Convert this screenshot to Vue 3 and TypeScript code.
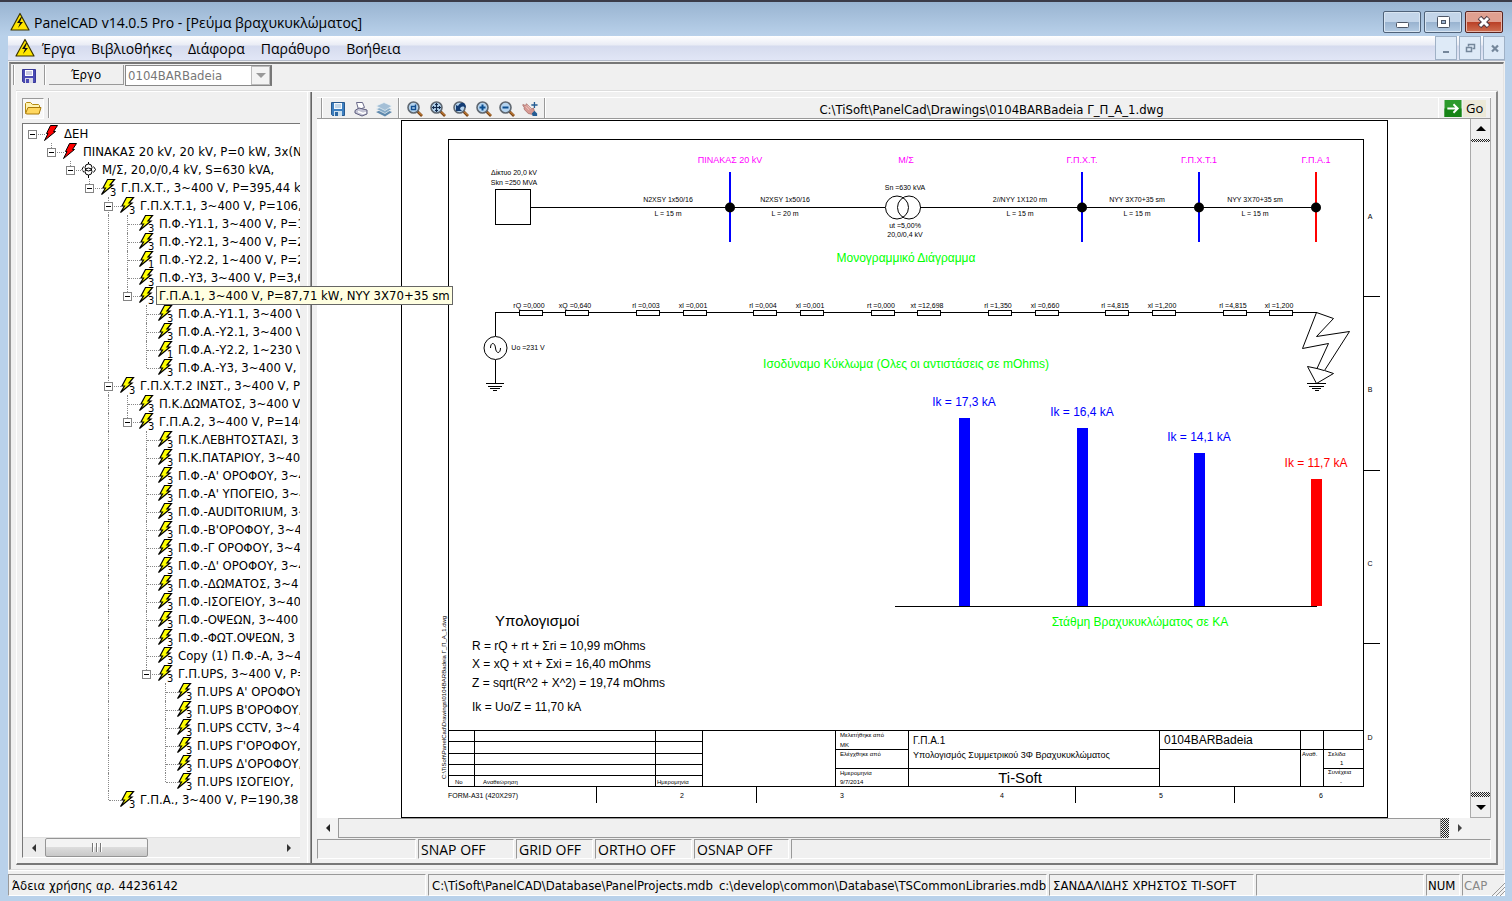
<script setup lang="ts">
import { computed, ref } from 'vue'

interface RawNode { depth: number; label: string; kind: 'supply' | 'trafo' | 'panel'; phase?: string; parent?: boolean; hovered?: boolean }
interface Row extends RawNode { guides: boolean[]; last: boolean }

const menus: string[] = ['Έργα', 'Βιβλιοθήκες', 'Διάφορα', 'Παράθυρο', 'Βοήθεια']
const project = ref<string>('0104BARBadeia')

const panel = (depth: number, label: string, phase = '3', parent = false, hovered = false): RawNode => ({ depth, label, kind: 'panel', phase, parent, hovered })

const nodes: RawNode[] = [
  { depth: 0, label: 'ΔΕΗ', kind: 'supply', parent: true },
  { depth: 1, label: 'ΠΙΝΑΚΑΣ 20 kV, 20 kV, P=0 kW, 3x(N2', kind: 'supply', parent: true },
  { depth: 2, label: 'Μ/Σ, 20,0/0,4 kV, S=630 kVA,', kind: 'trafo', parent: true },
  panel(3, 'Γ.Π.Χ.Τ., 3~400 V, P=395,44 kW', '3', true),
  panel(4, 'Γ.Π.Χ.Τ.1, 3~400 V, P=106,', '3', true),
  panel(5, 'Π.Φ.-Υ1.1, 3~400 V, P=1'),
  panel(5, 'Π.Φ.-Υ2.1, 3~400 V, P=2'),
  panel(5, 'Π.Φ.-Υ2.2, 1~400 V, P=2', '1'),
  panel(5, 'Π.Φ.-Υ3, 3~400 V, P=3,6'),
  panel(5, 'Γ.Π.Α.1', '3', true, true),
  panel(6, 'Π.Φ.Α.-Υ1.1, 3~400 V'),
  panel(6, 'Π.Φ.Α.-Υ2.1, 3~400 V'),
  panel(6, 'Π.Φ.Α.-Υ2.2, 1~230 V', '1'),
  panel(6, 'Π.Φ.Α.-Υ3, 3~400 V,'),
  panel(4, 'Γ.Π.Χ.Τ.2 ΙΝΣΤ., 3~400 V, P', '3', true),
  panel(5, 'Π.Κ.ΔΩΜΑΤΟΣ, 3~400 V,'),
  panel(5, 'Γ.Π.Α.2, 3~400 V, P=146', '3', true),
  panel(6, 'Π.Κ.ΛΕΒΗΤΟΣΤΑΣΙ, 3~'),
  panel(6, 'Π.Κ.ΠΑΤΑΡΙΟΥ, 3~400'),
  panel(6, "Π.Φ.-Α' ΟΡΟΦΟΥ, 3~4"),
  panel(6, "Π.Φ.-Α' ΥΠΟΓΕΙΟ, 3~4"),
  panel(6, 'Π.Φ.-AUDITORIUM, 3~'),
  panel(6, "Π.Φ.-Β'ΟΡΟΦΟΥ, 3~4"),
  panel(6, 'Π.Φ.-Γ ΟΡΟΦΟΥ, 3~4'),
  panel(6, "Π.Φ.-Δ' ΟΡΟΦΟΥ, 3~4"),
  panel(6, 'Π.Φ.-ΔΩΜΑΤΟΣ, 3~4'),
  panel(6, 'Π.Φ.-ΙΣΟΓΕΙΟΥ, 3~40'),
  panel(6, 'Π.Φ.-ΟΨΕΩΝ, 3~400'),
  panel(6, 'Π.Φ.-ΦΩΤ.ΟΨΕΩΝ, 3'),
  panel(6, 'Copy (1) Π.Φ.-Α, 3~4'),
  panel(6, 'Γ.Π.UPS, 3~400 V, P=', '3', true),
  panel(7, "Π.UPS Α' ΟΡΟΦΟΥ"),
  panel(7, "Π.UPS Β'ΟΡΟΦΟΥ,"),
  panel(7, 'Π.UPS CCTV, 3~4'),
  panel(7, "Π.UPS Γ'ΟΡΟΦΟΥ,"),
  panel(7, "Π.UPS Δ'ΟΡΟΦΟΥ,"),
  panel(7, 'Π.UPS ΙΣΟΓΕΙΟΥ,'),
  panel(4, 'Γ.Π.Α., 3~400 V, P=190,38'),
]

function continues(index: number, depth: number): boolean {
  for (let i = index + 1; i < nodes.length; i++) {
    if (nodes[i].depth < depth) return false
    if (nodes[i].depth === depth) return true
  }
  return false
}

const rows = computed<Row[]>(() =>
  nodes.map((n, i) => ({
    ...n,
    guides: Array.from({ length: n.depth }, (_, d) => continues(i, d)),
    last: !continues(i, n.depth),
  })),
)

const zoomTools = ['window', 'extents', 'previous', 'in', 'out']
const zoomLabels = ['Zoom window', 'Zoom extents', 'Zoom previous', 'Zoom in', 'Zoom out']

const buses = [
  { x: 730, name: 'ΠΙΝΑΚΑΣ 20 kV', color: '#00f' },
  { x: 1082, name: 'Γ.Π.Χ.Τ.', color: '#00f' },
  { x: 1199, name: 'Γ.Π.Χ.Τ.1', color: '#00f' },
  { x: 1316, name: 'Γ.Π.Α.1', color: '#f00' },
]
const cables = [
  { x: 668, type: 'N2XSY 1x50/16', len: 'L = 15 m' },
  { x: 785, type: 'N2XSY 1x50/16', len: 'L = 20 m' },
  { x: 1020, type: '2//NYY 1X120 rm', len: 'L = 15 m' },
  { x: 1137, type: 'NYY 3X70+35 sm', len: 'L = 15 m' },
  { x: 1255, type: 'NYY 3X70+35 sm', len: 'L = 15 m' },
]
const impedances = [
  { x: 531, t: 'rQ =0,000' }, { x: 577, t: 'xQ =0,640' },
  { x: 648, t: 'rl =0,003' }, { x: 695, t: 'xl =0,001' },
  { x: 765, t: 'rl =0,004' }, { x: 812, t: 'xl =0,001' },
  { x: 883, t: 'rt =0,000' }, { x: 929, t: 'xt =12,698' },
  { x: 1000, t: 'rl =1,350' }, { x: 1047, t: 'xl =0,660' },
  { x: 1117, t: 'rl =4,815' }, { x: 1164, t: 'xl =1,200' },
  { x: 1235, t: 'rl =4,815' }, { x: 1281, t: 'xl =1,200' },
]
const levels = [
  { x: 959, top: 418, label: 'Ik = 17,3 kA', color: '#00f' },
  { x: 1077, top: 428, label: 'Ik = 16,4 kA', color: '#00f' },
  { x: 1194, top: 453, label: 'Ik = 14,1 kA', color: '#00f' },
  { x: 1311, top: 479, label: 'Ik = 11,7 kA', color: '#f00' },
]
const formulas = [
  { y: 650, t: 'R = rQ + rt + Σri = 10,99 mOhms' },
  { y: 668, t: 'X = xQ + xt + Σxi = 16,40 mOhms' },
  { y: 687, t: 'Z = sqrt(R^2 + X^2) = 19,74 mOhms' },
  { y: 711, t: 'Ik = Uo/Z = 11,70 kA' },
]
const zonesV = [{ y: 219, t: 'A' }, { y: 392, t: 'B' }, { y: 566, t: 'C' }, { y: 740, t: 'D' }]
const zonesH = [{ x: 682, t: '2' }, { x: 842, t: '3' }, { x: 1002, t: '4' }, { x: 1161, t: '5' }, { x: 1321, t: '6' }]
const snaps = ['SNAP OFF', 'GRID OFF', 'ORTHO OFF', 'OSNAP OFF']
</script>

<template>
  <div class="window">
    <header class="titlebar">
      <svg class="warn" viewBox="0 0 20 20" aria-hidden="true">
        <path d="M10 1.500 19 18H1Z" fill="#ffe600" stroke="#3a3300" stroke-width="1.200" stroke-linejoin="round" />
        <path d="M11 5 7 11h3l-2 5 5-6h-3l2-5Z" fill="#111" />
      </svg>
      <h1>PanelCAD v14.0.5 Pro - [Ρεύμα βραχυκυκλώματος]</h1>
      <div class="caption">
        <button type="button" aria-label="Minimize">
          <svg viewBox="0 0 36 20"><rect x="12.500" y="10.500" width="12" height="5" rx="1" fill="#fff" stroke="#4d5666" /></svg>
        </button>
        <button type="button" aria-label="Restore">
          <svg viewBox="0 0 36 20"><rect x="12.500" y="4.500" width="12" height="11" rx="1" fill="#fff" stroke="#4d5666" /><rect x="16.500" y="8.500" width="4" height="3" fill="#9db5d0" stroke="#4d5666" /></svg>
        </button>
        <button type="button" class="close" aria-label="Close">
          <svg viewBox="0 0 36 20"><path d="M13.500 5.500l9 9M22.500 5.500l-9 9" stroke="#4d3a45" stroke-width="5" /><path d="M14 6l8 8M22 6l-8 8" stroke="#fff" stroke-width="3" /></svg>
        </button>
      </div>
    </header>

    <div class="client">
      <nav class="menubar">
        <svg class="warn" viewBox="0 0 20 20" aria-hidden="true">
          <path d="M10 1.500 19 18H1Z" fill="#ffe600" stroke="#3a3300" stroke-width="1.200" stroke-linejoin="round" />
          <path d="M11 5 7 11h3l-2 5 5-6h-3l2-5Z" fill="#111" />
        </svg>
        <button v-for="m in menus" :key="m" type="button" class="menu">{{ m }}</button>
        <div class="mdi">
          <button type="button" aria-label="Minimize document"><svg viewBox="0 0 20 20"><path d="M7 14h6" stroke="#75879b" stroke-width="2" /></svg></button>
          <button type="button" aria-label="Restore document"><svg viewBox="0 0 20 20"><path d="M8.500 8.500V6.500h6v4h-2M8 6.500h7" fill="none" stroke="#75879b" stroke-width="1.500" /><path d="M6.500 9.500h5v4h-5ZM6 9.500h6" fill="none" stroke="#75879b" stroke-width="1.500" /></svg></button>
          <button type="button" aria-label="Close document"><svg viewBox="0 0 20 20"><path d="M8 7.500l6 6M14 7.500l-6 6" stroke="#75879b" stroke-width="2.200" /></svg></button>
        </div>
      </nav>

      <div class="document">
        <div class="projectbar">
          <i class="sep"></i>
          <button type="button" class="tool" aria-label="Save project">
            <svg viewBox="0 0 16 16"><path d="M1.500 1.500h13v13h-12l-1-1Z" fill="#4b4bb4" stroke="#38389a" /><path d="M4 2h8v6H4Z" fill="#fff" /><path d="M5 4h6M5 6h6" stroke="#9a9ac8" /><path d="M4 10h8v5H4Z" fill="#d9d9e6" /><path d="M5 11h3v4H5Z" fill="#4b4bb4" /></svg>
          </button>
          <i class="sep"></i>
          <label class="project-label" for="project">Έργο</label>
          <div class="combo">
            <select id="project" v-model="project"><option>0104BARBadeia</option></select>
            <span class="combo-arrow" aria-hidden="true"></span>
          </div>
        </div>

        <main class="workspace">
          <section class="left">
            <div class="lefttools">
              <button type="button" class="folder" aria-label="Open folder">
                <svg viewBox="0 0 18 16"><path d="M1.500 12.500v-9l1-1h4l2 2h6l1 1v7Z" fill="#fff3b0" stroke="#b58a10" /><path d="M1.500 13.500 4 7.500h13l-2 6.500h-12Z" fill="#ffd75e" stroke="#a87908" /></svg>
              </button>
              <i class="sep"></i>
            </div>
            <div class="treebox">
              <ul class="tree">
                <li v-for="(r, i) in rows" :key="i" class="row">
                  <span v-for="(g, k) in r.guides" :key="k" class="guide" :class="{ on: g && k > 0 }"></span>
                  <span class="guide own" :class="{ root: r.depth === 0, last: r.last }">
                    <button v-if="r.parent" type="button" class="toggle" :aria-label="'Collapse ' + r.label"></button>
                  </span>
                  <svg class="node" viewBox="0 0 22 18" aria-hidden="true">
                    <template v-if="r.kind === 'trafo'">
                      <circle cx="8.500" cy="6.500" r="3.500" fill="#fff" stroke="#000" /><circle cx="8.500" cy="10.500" r="3.500" fill="none" stroke="#000" />
                      <path d="M8.500 1v2M8.500 14v3M3.500 5.500 2 8.500l2 3M13.500 5.500l2 3-2 3" fill="none" stroke="#000" />
                    </template>
                    <template v-else-if="r.kind === 'supply'">
                      <path d="M8.500.500h7l-4 6h2L2.500 15.500l3.500-7H4.500Z" fill="#f00" stroke="#000" />
                    </template>
                    <template v-else>
                      <path d="M8.500.500h7l-4.500 5.500h3L2.500 15.500 6.500 9H4Z" fill="#ff0" stroke="#000" stroke-width="1.200" />
                      <text x="11" y="17">{{ r.phase }}</text>
                    </template>
                  </svg>
                  <span v-if="!r.hovered" class="label">{{ r.label }}</span>
                </li>
              </ul>
              <div class="treescroll">
                <button type="button" class="arrow" aria-label="Scroll left"><svg viewBox="0 0 16 16"><path d="M10 4v8L6 8Z" fill="#333" /></svg></button>
                <div class="track"><span class="thumb"><b></b><b></b><b></b></span></div>
                <button type="button" class="arrow" aria-label="Scroll right"><svg viewBox="0 0 16 16"><path d="M6 4v8l4-4Z" fill="#333" /></svg></button>
              </div>
            </div>
            <div class="tooltip" role="tooltip">Γ.Π.Α.1, 3~400 V, P=87,71 kW, NYY 3X70+35 sm</div>
          </section>
          <div class="splitter"></div>

          <section class="right">
            <div class="drawtools">
              <i class="sep"></i>
              <button type="button" class="tool" aria-label="Save drawing">
                <svg viewBox="0 0 16 16"><path d="M1.500 1.500h13v13h-12l-1-1Z" fill="#3d7fc0" stroke="#27598f" /><path d="M4 2h8v6H4Z" fill="#f4f9fd" /><path d="M5 4h6M5 6h6" stroke="#8fb4d6" /><path d="M4 10h8v5H4Z" fill="#cde0ee" /><path d="M5 11h3v4H5Z" fill="#2c67a3" /></svg>
              </button>
              <button type="button" class="tool" aria-label="Print">
                <svg viewBox="0 0 16 16"><path d="M3.500 1.500h6l2 5-6 2Z" fill="#fff" stroke="#686888" /><path d="M2 9.500 6 7l8 2v4l-5 2-7-3Z" fill="#c3c3d4" stroke="#5d5d7d" /><path d="M5 10.500l5 2 3-1" fill="none" stroke="#fff" stroke-width="1.500" /></svg>
              </button>
              <button type="button" class="tool" aria-label="Layers">
                <svg viewBox="0 0 16 16"><path d="M0 11l8-3 8 3-7 4.500Z" fill="#5f89ad" /><path d="M0 8l8-3 8 3-7 4.500Z" fill="#86abc8" stroke="#eef3f7" stroke-width=".700" /><path d="M0 5l8-3.500L16 5 9 9.500Z" fill="#a4bfd6" stroke="#eef3f7" stroke-width=".700" /></svg>
              </button>
              <i class="sep"></i>
              <button v-for="(z, i) in zoomTools" :key="z" type="button" class="tool" :aria-label="zoomLabels[i]">
                <svg viewBox="0 0 16 16">
                  <path d="M10.500 10.500l4.500 4.500" stroke="#7c4413" stroke-width="2.600" /><path d="M11 10.500l4 4" stroke="#e49a4a" />
                  <circle cx="6.500" cy="6.500" r="5.500" fill="#b5d4ef" stroke="#5f6770" stroke-width="1.600" />
                  <path v-if="z === 'window'" d="M4.500 5.500h4v3h-4ZM8.500 3.500v5" fill="none" stroke="#134f91" stroke-width="1.400" />
                  <path v-else-if="z === 'extents'" d="M6.500 2v9M2 6.500h9M5 3.500h3M5 9.500h3M3.500 5v3M9.500 5v3" stroke="#142b4d" stroke-width="1.200" />
                  <path v-else-if="z === 'previous'" d="M3 4v6h6L7 8c1-3 3-3 6-1 0-6-5-7-8-2Z" fill="#123b73" />
                  <path v-else-if="z === 'in'" d="M6.500 3.500v6M3.500 6.500h6" stroke="#0c4f91" stroke-width="2" />
                  <path v-else d="M3.500 6.500h6" stroke="#0c4f91" stroke-width="2" />
                </svg>
              </button>
              <button type="button" class="tool" aria-label="Pan">
                <svg viewBox="0 0 18 16"><path d="M1 3l3 1 1-2 6 6 2-1 1 4-3 3-4-1-5-5 1-1-2-3Z" fill="#d79a94" stroke="#a06560" stroke-width=".800" /><path d="M4 5l4 4M6 4l4 4" stroke="#f1cdc8" /><path d="M11 13l3-3 3 3v3h-5Z" fill="#245c93" /><path d="M14 0v7M10.500 3.500h7" stroke="#245c93" stroke-width="1.500" /></svg>
              </button>
              <i class="sep"></i>
              <output class="path">C:\TiSoft\PanelCad\Drawings\0104BARBadeia Γ_Π_Α_1.dwg</output>
              <button type="button" class="go">
                <svg viewBox="0 0 18 18"><rect width="18" height="18" fill="#2c9a2c" /><rect y="9" width="18" height="9" fill="#168416" /><path d="M3 9h11M9.500 4.500 14 9l-4.500 4.500" fill="none" stroke="#fff" stroke-width="2" /></svg>
                <span>Go</span>
              </button>
            </div>

            <div class="stage">
              <div class="canvas">
                <svg class="drawing" width="1154" height="699" viewBox="317 119 1154 699" role="img" aria-label="Ρεύμα βραχυκυκλώματος">
                  <g class="ink crisp">
                    <rect x="401.500" y="120.500" width="986" height="697" />
                    <rect x="448.500" y="139.500" width="915" height="647" />
                    <path d="M1363 296.500h17M1363 470.500h17M1363 643.500h17M596.500 787v16M756.500 787v16M1075.500 787v16M1234.500 787v16" />
                    <path d="M448 730.500h915M448 741.500h254M448 753.500h254M448 764.500h254M448 775.500h254M474.500 730v56M655.500 730v56M702.500 730v56" />
                    <path d="M835.500 730v56M835 749.500h73M835 768.500h324M908.500 730v56M1159.500 730v56M1159 749.500h204M1300.500 730v56M1323.500 730v56M1323 768.500h40" />
                    <rect x="495.500" y="189.500" width="35" height="35" />
                    <path d="M530 207.500h355M920 207.500h396M495.500 336V312.500H1317M495.500 360v23" />
                    <path d="M895 606.500h422" />
                    <path d="M486 383.500h18M488 386.500h14M490 388.500h10M493 390.500h4M1307 383.500h19M1309 386.500h15M1312 388.500h9M1315 390.500h4" />
                  </g>
                  <g class="ink">
                    <circle cx="897" cy="207.500" r="11.500" /><circle cx="909" cy="207.500" r="11.500" />
                    <circle cx="495.500" cy="348" r="11.500" />
                    <path d="M490.500 348c0-6 4.500-6 5 0s5 6 5 0" />
                    <path d="M1316.500 312.500 1333.500 318.500 1316.500 336.500 1349.500 331.500 1324.500 370.500 1333.500 373.500 1316.500 383.500 1307.500 366.500 1317 368.500 1328.500 343.500 1302.500 348.500ZM1317 368.500l7 2" />
                  </g>

                  <g v-for="b in buses" :key="b.x">
                    <rect class="crisp" :x="b.x - 1" y="172" width="2" height="70" :fill="b.color" />
                    <circle :cx="b.x" cy="207.500" r="5" />
                    <text class="t9 mag mid" :x="b.x" y="163">{{ b.name }}</text>
                  </g>
                  <text class="t9 mag mid" x="906" y="163">Μ/Σ</text>
                  <g v-for="c in cables" :key="c.x" class="t7 mid">
                    <text :x="c.x" y="202">{{ c.type }}</text><text :x="c.x" y="216">{{ c.len }}</text>
                  </g>
                  <g class="t7 mid">
                    <text x="514" y="175">Δίκτυο 20,0 kV</text><text x="514" y="185">Skn =250 MVA</text>
                    <text x="905" y="190">Sn =630 kVA</text><text x="905" y="228">ut =5,00%</text><text x="905" y="237">20,0/0,4 kV</text>
                    <text x="528" y="350">Uo =231 V</text>
                  </g>
                  <g v-for="z in impedances" :key="z.x">
                    <rect class="crisp box" :x="z.x - 11.5" y="310.500" width="23" height="5" />
                    <text class="t7 mid" :x="z.x - 2" y="308">{{ z.t }}</text>
                  </g>
                  <g class="t12 green mid">
                    <text x="906" y="262">Μονογραμμικό Διάγραμμα</text>
                    <text x="906" y="368">Ισοδύναμο Κύκλωμα (Ολες οι αντιστάσεις σε mOhms)</text>
                    <text x="1140" y="626">Στάθμη Βραχυκυκλώματος σε ΚΑ</text>
                  </g>
                  <g v-for="l in levels" :key="l.x" :fill="l.color">
                    <rect class="crisp" :x="l.x" :y="l.top" width="11" :height="606 - l.top" />
                    <text class="t12 mid" :x="l.x + 5" :y="l.top - 12">{{ l.label }}</text>
                  </g>

                  <text class="t15" x="495" y="626">Υπολογισμοί</text>
                  <text v-for="f in formulas" :key="f.y" class="t12" x="472" :y="f.y">{{ f.t }}</text>

                  <text v-for="z in zonesV" :key="z.t" class="t7 mid" x="1370" :y="z.y">{{ z.t }}</text>
                  <text v-for="z in zonesH" :key="z.t" class="t7 mid" :x="z.x" y="798">{{ z.t }}</text>
                  <text class="t7" x="448" y="798">FORM-A31 (420X297)</text>
                  <text class="t6" transform="translate(446 779) rotate(-90)">C:\TiSoft\PanelCad\Drawings\0104BARBadeia Γ_Π_Α_1.dwg</text>
                  <g class="t6">
                    <text x="455" y="784">No</text><text x="483" y="784">Αναθεώρηση</text><text x="657" y="784">Ημερομηνία</text>
                    <text x="840" y="737">Μελετήθηκε από</text><text x="840" y="747">ΜΚ</text><text x="840" y="756">Ελέγχθηκε από</text>
                    <text x="840" y="775">Ημερομηνία</text><text x="840" y="784">9/7/2014</text>
                    <text x="1302" y="756">Αναθ.</text><text x="1328" y="756">Σελίδα</text><text x="1340" y="765">1</text>
                    <text x="1328" y="774">Συνέχεια</text><text x="1340" y="784">-</text>
                  </g>
                  <g class="t10"><text x="913" y="744">Γ.Π.Α.1</text></g>
                  <g class="t9"><text x="913" y="758">Υπολογισμός Συμμετρικού 3Φ Βραχυκυκλώματος</text></g>
                  <text class="t15 mid" x="1020" y="783">Ti-Soft</text>
                  <text class="t12" x="1164" y="744">0104BARBadeia</text>
                </svg>
              </div>
              <div class="vscroll">
                <button type="button" class="arrow" aria-label="Scroll up"><svg viewBox="0 0 20 20"><path d="M10 7l5 5H5Z" /></svg></button>
                <span class="grip"></span><span class="fill"></span><span class="grip"></span>
                <button type="button" class="arrow" aria-label="Scroll down"><svg viewBox="0 0 20 20"><path d="M10 13 5 8h10Z" /></svg></button>
              </div>
            </div>
            <div class="hscroll">
              <button type="button" class="arrow" aria-label="Scroll left"><svg viewBox="0 0 16 16"><path d="M10 4v8L6 8Z" fill="#222" /></svg></button>
              <span class="fill"></span><span class="grip"></span>
              <button type="button" class="arrow" aria-label="Scroll right"><svg viewBox="0 0 16 16"><path d="M6 4v8l4-4Z" fill="#444" /></svg></button>
            </div>
            <div class="snapbar">
              <span class="cell"></span>
              <button v-for="s in snaps" :key="s" type="button" class="cell">{{ s }}</button>
              <span class="cell"></span>
            </div>
          </section>
        </main>
      </div>

      <footer class="statusbar">
        <span class="cell">Άδεια χρήσης αρ. 44236142</span>
        <span class="cell"><span>C:\TiSoft\PanelCAD\Database\PanelProjects.mdb</span><span>c:\develop\common\Database\TSCommonLibraries.mdb</span></span>
        <span class="cell">ΣΑΝΔΑΛΙΔΗΣ ΧΡΗΣΤΟΣ TI-SOFT</span>
        <span class="cell"></span>
        <span class="cell">NUM</span>
        <span class="cell dim">CAP</span>
        <svg class="resize" viewBox="0 0 14 14" aria-hidden="true"><path d="M1 14 14 1M5 14l9-9M9 14l5-5" stroke="#999" /></svg>
      </footer>
    </div>
  </div>
</template>

<style>
html, body { margin: 0; }
</style>

<style scoped>
* { box-sizing: border-box; }
button { font: inherit; color: inherit; background: none; border: 0; padding: 0; margin: 0; display: block; }
button svg { display: block; }
.window {
  display: flex; flex-direction: column; height: 100vh; min-height: 600px; padding: 0 7px 5px 8px; overflow: hidden;
  border-top: 2px solid #3b3b48; background: linear-gradient(#99b4d1, #b9d1ea 34px);
  font: 13px "DejaVu Sans Condensed", "DejaVu Sans", sans-serif; color: #000;
}
.titlebar { flex: none; height: 34px; display: flex; align-items: center; padding: 6px 2px 0 2px; }
.warn { width: 20px; height: 20px; flex: none; }
h1 { margin: 0 0 0 4px; flex: 1; font: 14px "Open Sans", "Noto Sans", sans-serif; white-space: nowrap; }
.caption { display: flex; gap: 3px; }
.caption button { width: 38px; height: 22px; border: 1px solid #4f6279; border-radius: 2px; background: linear-gradient(#c3d5e9 48%, #98b2cf 50%, #b4cbe3); box-shadow: inset 0 0 0 1px #d8e5f2; }
.caption button.close { background: linear-gradient(#e0a090 48%, #b93f25 50%, #cf6f51); border-color: #5a2420; box-shadow: inset 0 0 0 1px #e8b5a8; }
.client { flex: 1; min-height: 0; display: flex; flex-direction: column; background: #f0f0f0; }
.menubar { flex: none; height: 25px; display: flex; align-items: center; padding: 0 0 0 7px; background: linear-gradient(#fff, #e9ecf5 9px, #d5dbee 10px, #e1e6f6); border-bottom: 1px solid #b5bccb; font: 14px "Open Sans", "Noto Sans", sans-serif; }
.menu { margin-left: 16px; white-space: nowrap; }
.warn + .menu { margin-left: 7px; }
.mdi { margin-left: auto; display: flex; gap: 2px; align-self: stretch; }
.mdi button { width: 22px; height: 24px; border: 1px solid #9fb1c6; background: #deeaf7; }
.document { flex: 1; min-height: 0; display: flex; flex-direction: column; margin: 1px 1px 0; border-top: 2px solid #777; border-left: 2px solid #999; border-right: 1px solid #e3e3e3; border-bottom: 1px solid #ddd; padding: 0 5px 4px 5px; }
.projectbar { flex: none; height: 27px; display: flex; align-items: center; padding: 0 0 5px; }
.sep { width: 1px; height: 20px; background: #999; box-shadow: 1px 0 #fff; flex: none; }
.tool { width: 23px; height: 20px; flex: none; }
.tool svg { width: 16px; height: 16px; margin: 1px auto 0; }
.projectbar > .sep:first-child { margin-left: -3px; }
.projectbar .tool { width: 30px; }
.project-label { width: 75px; height: 20px; margin-left: 4px; line-height: 20px; text-align: center; border-bottom: 1px solid #999; border-right: 1px solid #999; }
.combo { position: relative; width: 147px; height: 21px; border: 1px solid #888; border-right: 2px solid #777; background: #fff; margin-left: 1px; }
.combo select { appearance: none; width: 100%; height: 19px; border: 0; padding: 0 0 0 2px; background: none; color: #777; font: inherit; }
.combo-arrow { position: absolute; right: 0; top: 0; width: 19px; height: 19px; border: 1px solid #bbb; background: #f3f3f3; pointer-events: none; }
.combo-arrow::after { content: ""; position: absolute; left: 4px; top: 6px; border: 5px solid transparent; border-top-color: #999; border-bottom: 0; }
.workspace { flex: 1; min-height: 0; display: flex; border: 1px solid; border-color: #fff #888 #777 #fff; border-right-width: 2px; border-bottom-width: 2px; box-shadow: 0 -1px #ddd; }
.left { position: relative; flex: none; width: 284px; padding: 5px 1px 5px 5px; display: flex; flex-direction: column; }
.lefttools { flex: none; height: 26px; display: flex; align-items: center; gap: 4px; padding-bottom: 4px; }
.folder { width: 22px; height: 21px; border: 1px solid; border-color: #999 #fff #fff #999; background: #f8f8f8; }
.folder svg { width: 18px; height: 16px; margin: 1px auto; }
.treebox { flex: 1; min-height: 0; background: #fff; border-left: 1px solid #777; border-top: 1px solid #777; border-bottom: 1px solid #fff; display: flex; flex-direction: column; overflow: hidden; }
.tree { flex: 1; min-height: 0; overflow: hidden; margin: 0; padding: 1px 0 0; list-style: none; }
.row { display: flex; height: 18px; align-items: center; white-space: nowrap; }
.guide { position: relative; flex: none; width: 19px; height: 18px; }
.guide.on::before, .own::before { content: ""; position: absolute; left: 9px; top: 0; bottom: 0; border-left: 1px dotted #888; }
.own.last::before { bottom: 9px; }
.own.root::before { display: none; }
.own::after { content: ""; position: absolute; left: 10px; right: -3px; top: 9px; border-top: 1px dotted #888; }
.toggle { position: absolute; z-index: 1; left: 5px; top: 5px; width: 9px; height: 9px; border: 1px solid #848484; background: linear-gradient(#000, #000) center / 5px 1px no-repeat #fff; }
.node { flex: none; width: 22px; height: 18px; overflow: visible; }
.node text { font: 11px "DejaVu Sans Condensed", sans-serif; }
.label { line-height: 18px; }
.treescroll { flex: none; height: 20px; display: flex; background: #ececec; border-top: 1px solid #e0e0e0; }
.arrow svg { width: 16px; height: 16px; margin: auto; }
.treescroll .arrow { width: 22px; }
.track { flex: 1; }
.thumb { display: flex; justify-content: center; align-items: center; gap: 2px; width: 103px; height: 19px; border: 1px solid #959595; border-radius: 2px; background: linear-gradient(#f3f3f3 45%, #dcdcdc 50%, #c8c8c8); }
.thumb b { width: 2px; height: 9px; background: #777; border-right: 1px solid #fff; }
.tooltip { position: absolute; z-index: 5; left: 139px; top: 194px; height: 19px; line-height: 17px; padding: 0 2px; border: 1px solid #666; background: #ffffe1; white-space: nowrap; }
.splitter { flex: none; width: 16px; border-left: 6px solid #f0f0f0; background: linear-gradient(90deg, #fff 0 1px, #f0f0f0 1px 3px, #999 3px 4px, #666 4px 5px, #f0f0f0 5px); }
.right { flex: 1; min-width: 0; display: flex; flex-direction: column; padding: 5px 5px 4px 0; }
.drawtools { flex: none; height: 22px; display: flex; align-items: center; border-top: 1px solid #fff; border-bottom: 1px solid #999; padding-left: 4px; }
.drawtools .tool { height: 19px; }
.drawtools .sep + .tool { margin-left: 4px; }
.drawtools .tool + .sep { margin-left: 3px; }
.path { flex: 1; padding-top: 2px; text-align: center; white-space: nowrap; }
.go { display: flex; align-items: center; gap: 1px; width: 53px; height: 20px; padding-left: 5px; border-left: 1px solid #fff; border-right: 1px solid #aaa; }
.go svg { width: 18px; height: 17px; }
.go span { padding: 0 3px; height: 17px; background: #ece9d8; font: 13px/17px "Open Sans", sans-serif; }
.stage { flex: 1; min-height: 0; display: flex; background: #fff; }
.canvas { flex: 1; min-width: 0; overflow: hidden; display: flex; justify-content: center; }
.drawing { flex: none; display: block; font-family: "Liberation Sans", Arial, sans-serif; }
.ink { fill: none; stroke: #000; stroke-width: 1; }
.crisp { shape-rendering: crispEdges; }
.box { fill: #fff; stroke: #000; }
.mid { text-anchor: middle; }
.t6 { font-size: 6px; }
.t7 { font-size: 7px; }
.t9 { font-size: 9px; }
.t10 { font-size: 10px; }
.t12 { font-size: 12px; }
.t15 { font-size: 15px; }
.mag { fill: #f0f; }
.green { fill: #0f0; }
.vscroll { flex: none; width: 21px; display: flex; flex-direction: column; background: #f0f0f0; border: 1px solid #aaa; border-top: 0; }
.vscroll .fill { flex: 1; }
.vscroll .arrow { height: 20px; }
.vscroll .arrow svg { width: 20px; height: 20px; }
.vscroll .grip { height: 3px; background: repeating-conic-gradient(#222 0 25%, #eee 0 50%) 0 0 / 2px 2px; }
.vscroll .fill + .grip { height: 5px; }
.hscroll { flex: none; height: 20px; display: flex; padding-right: 21px; }
.hscroll .arrow { width: 21px; background: #f3f3f3; }
.hscroll .fill { flex: 1; border: 1px solid #999; }
.hscroll .grip { width: 8px; background: repeating-conic-gradient(#222 0 25%, #eee 0 50%) 0 0 / 2px 2px; }
.snapbar { flex: none; height: 20px; display: grid; grid-template-columns: 99px 96px 77px 97px 95px 1fr; column-gap: 2px; margin-top: 1px; font: 14px "Open Sans", "Noto Sans", sans-serif; }
.cell { border: 1px solid; border-color: #999 #fff #fff #999; white-space: nowrap; overflow: hidden; }
.snapbar .cell { text-align: left; padding-left: 2px; line-height: 17px; }
.statusbar { position: relative; flex: none; height: 26px; padding: 3px 0 0; display: grid; grid-template-columns: 418px minmax(0, 619px) 205px 1fr 34px 43px; column-gap: 2px; border-top: 1px solid #fff; }
.statusbar .cell { padding-left: 3px; line-height: 21px; }
.statusbar .cell > span + span { margin-left: 6px; }
.statusbar .cell:nth-child(n + 5) { padding-left: 1px; }
.dim { color: #888; }
.resize { position: absolute; right: 0; bottom: 0; width: 14px; height: 14px; }
</style>
